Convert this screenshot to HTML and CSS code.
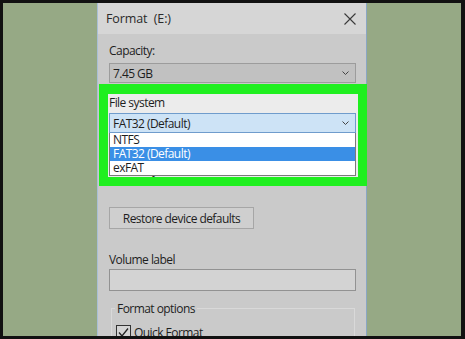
FILE: index.html
```html
<!DOCTYPE html>
<html lang="en">
  <head>
    <meta charset="UTF-8" />
    <meta name="viewport" content="width=device-width, initial-scale=1.0" />
    <title>Format (E:)</title>
    <link rel="stylesheet" href="styles.css">
  </head>
  <body>
    <div class="frame">
      <div class="desk">
        <div class="dialog">
          <!-- title bar -->
          <div class="titlebar">
            <span class="title">Format&nbsp; (E:)</span>
            <svg class="close" width="12" height="12" viewBox="0 0 12 12">
              <path d="M0.5 0.5 L11.5 11.5 M11.5 0.5 L0.5 11.5" stroke="#3a3a3a" stroke-width="1.1" fill="none" />
            </svg>
          </div>

          <div class="content">
            <div class="label">Capacity:</div>
            <div class="select grey">
              <span>7.45 GB</span>
              <svg class="chev" width="7" height="4" viewBox="0 0 7 4"><path d="M0.5 0.5 L3.5 3.5 L6.5 0.5" stroke="#444" fill="none" /></svg>
            </div>

            <!-- highlighted file system block -->
            <div class="highlight">
              <div class="hl-inner">
                <div class="label tight">File system</div>
                <div class="combo">
                  <div class="select blue">
                    <span>FAT32 (Default)</span>
                    <svg class="chev" width="7" height="4" viewBox="0 0 7 4"><path d="M0.5 0.5 L3.5 3.5 L6.5 0.5" stroke="#444" fill="none" /></svg>
                  </div>
                  <div class="alloc">16 kilobytes</div>
                  <ul class="list">
                    <li>NTFS</li>
                    <li class="sel">FAT32 (Default)</li>
                    <li>exFAT</li>
                  </ul>
                </div>
              </div>
            </div>

            <button class="btn">Restore device defaults</button>

            <div class="label vol">Volume label</div>
            <div class="input"></div>

            <fieldset class="group">
              <legend>Format options</legend>
              <div class="check">
                <span class="box">
                  <svg width="13" height="13" viewBox="0 0 13 13"><path d="M2 6.5 L5 10 L11 2.5" stroke="#222" stroke-width="1.3" fill="none" /></svg>
                </span>
                Quick Format
              </div>
            </fieldset>
          </div>
        </div>
      </div>
    </div>
  </body>
</html>
```

FILE: styles.css
```css
body {
  margin: 0;
  background-color: #111;
  font-family: "Open Sans", "Noto Sans", sans-serif;
  font-size: 12px;
  letter-spacing: -0.55px;
  color: #1e1e1e;
}

.frame {
  height: 339px;
  padding: 3px 4px 3px 3px;
  box-sizing: border-box;
}

.desk {
  height: 100%;
  background-color: #96a985;
  overflow: hidden;
}

.dialog {
  margin-left: 94px;
  width: 270px;
  height: 100%;
  box-sizing: border-box;
  border-left: 1px solid #a9bfd6;
  border-right: 1px solid #8aa6c4;
  background-color: #cacaca;
}

.titlebar {
  height: 31px;
  display: flex;
  align-items: center;
  justify-content: space-between;
  padding: 0 10px 0 8px;
  background-color: #d6d6d6;
}

.title {
  font-size: 12.5px;
  letter-spacing: -0.1px;
  color: #2a2a2a;
}

.content {
  padding: 9px 10px 0 11px;
}

.label {
  line-height: 16px;
}

.label.tight {
  line-height: 15px;
}

.select {
  height: 20px;
  box-sizing: border-box;
  display: flex;
  align-items: center;
  justify-content: space-between;
  padding: 0 6px 0 3px;
}

.select.grey {
  margin-top: 4px;
  background-color: #c1c1c1;
  border: 1px solid #9c9c9c;
}

.select.blue {
  margin-top: 3px;
  background-color: #cde3f6;
  border: 1px solid #6f9ccc;
}

.highlight {
  margin: 1px -11px 0 -10px;
  border: 9px solid #1fef1f;
  border-top-width: 10px;
}

.hl-inner {
  height: 83px;
  overflow: hidden;
  padding: 1px 2px 0 1px;
  box-sizing: border-box;
  background-color: #ececec;
}

.combo {
  position: relative;
}

.alloc {
  margin-top: 29px;
  padding-left: 4px;
  line-height: 16px;
}

.list {
  position: absolute;
  top: 20px;
  left: 0;
  right: 0;
  margin: 0;
  padding: 0;
  list-style: none;
  background-color: #fff;
  border: 1px solid #7a7a7a;
  border-top: none;
}

.list li {
  height: 14px;
  line-height: 14px;
  padding-left: 3px;
}

.list li.sel {
  background-color: #3a8fe6;
  color: #fff;
}

.btn {
  display: block;
  margin-top: 21px;
  width: 145px;
  height: 22px;
  padding: 0;
  font: inherit;
  letter-spacing: inherit;
  color: #1e1e1e;
  background-color: #cfcfcf;
  border: 1px solid #a6a6a6;
}

.label.vol {
  margin-top: 23px;
  line-height: 15px;
}

.input {
  margin-top: 2px;
  height: 22px;
  box-sizing: border-box;
  background-color: #d3d3d3;
  border: 1px solid #929292;
}

.group {
  margin: 10px 1px 0 2px;
  padding: 8px 6px;
  border: 1px solid #d9d9d9;
}

.group legend {
  padding: 0 2px;
  margin-left: -3px;
  line-height: 15px;
}

.check {
  display: flex;
  align-items: center;
  gap: 3px;
  margin-left: -2px;
}

.box {
  width: 15px;
  height: 15px;
  box-sizing: border-box;
  border: 1px solid #333;
  background-color: #d4d4d4;
  display: flex;
  align-items: center;
  justify-content: center;
}
```
